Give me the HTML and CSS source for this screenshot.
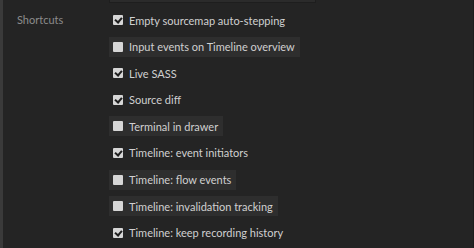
FILE: index.html
```html
<!DOCTYPE html>
<html lang="en">
  <head>
    <meta charset="UTF-8" />
    <title>Experiments</title>
    <link rel="stylesheet" href="styles.css">
  </head>
  <body>
    <div class="panel">
      <!-- previous section, scrolled mostly out of view -->
      <div class="section section-prev">
        <div class="section-title"></div>
        <div class="section-body">
          <div class="select-box"></div>
        </div>
      </div>

      <div class="section">
        <div class="section-title">Shortcuts</div>
        <div class="section-body">
          <label class="option checked"><span class="box"></span>Empty sourcemap auto-stepping</label>
          <label class="option"><span class="box"></span>Input events on Timeline overview</label>
          <label class="option checked"><span class="box"></span>Live SASS</label>
          <label class="option checked"><span class="box"></span>Source diff</label>
          <label class="option"><span class="box"></span>Terminal in drawer</label>
          <label class="option checked"><span class="box"></span>Timeline: event initiators</label>
          <label class="option"><span class="box"></span>Timeline: flow events</label>
          <label class="option"><span class="box"></span>Timeline: invalidation tracking</label>
          <label class="option checked"><span class="box"></span>Timeline: keep recording history</label>
        </div>
      </div>
    </div>
  </body>
</html>
```

FILE: styles.css
```css
body {
  margin: 0;
  background: #242424;
  font-family: Lato, "Open Sans", sans-serif;
  overflow: hidden;
}

.panel {
  display: flex;
  flex-direction: column;
  height: 248px;
  border-left: 3px solid #3a3a3a;
  border-right: 1px solid #1c1c1c;
  box-sizing: border-box;
  overflow: hidden;
}

.section {
  display: flex;
  flex-shrink: 0;
}

.section-prev {
  margin-top: -24px;
  height: 27px;
}

.section-title {
  width: 92px;
  padding-left: 14px;
  padding-top: 10px;
  font-size: 11px;
  color: #8c8c8c;
  flex-shrink: 0;
}

.section-body {
  display: flex;
  flex-direction: column;
  align-items: flex-start;
  gap: 6.6px;
  padding-top: 7px;
}

.section-prev .section-title,
.section-prev .section-body {
  padding-top: 0;
}

.select-box {
  width: 207px;
  height: 27px;
  background: #2b2b2b;
  border: 1px solid #1e1e1e;
  box-sizing: border-box;
}

.option {
  display: flex;
  align-items: center;
  height: 20px;
  padding: 0 5px 0 4px;
  font-size: 11px;
  color: #d0d0d0;
  background: #2e2e2e;
}

.option.checked {
  background: transparent;
}

.box {
  width: 10px;
  height: 10px;
  margin-right: 6px;
  background: #d6d6d6;
  border-radius: 1px;
  position: relative;
}

.option.checked .box::after {
  content: "";
  position: absolute;
  left: 3px;
  top: 1px;
  width: 3px;
  height: 5px;
  border-right: 2px solid #1e1e1e;
  border-bottom: 2px solid #1e1e1e;
  transform: rotate(40deg);
}
```
